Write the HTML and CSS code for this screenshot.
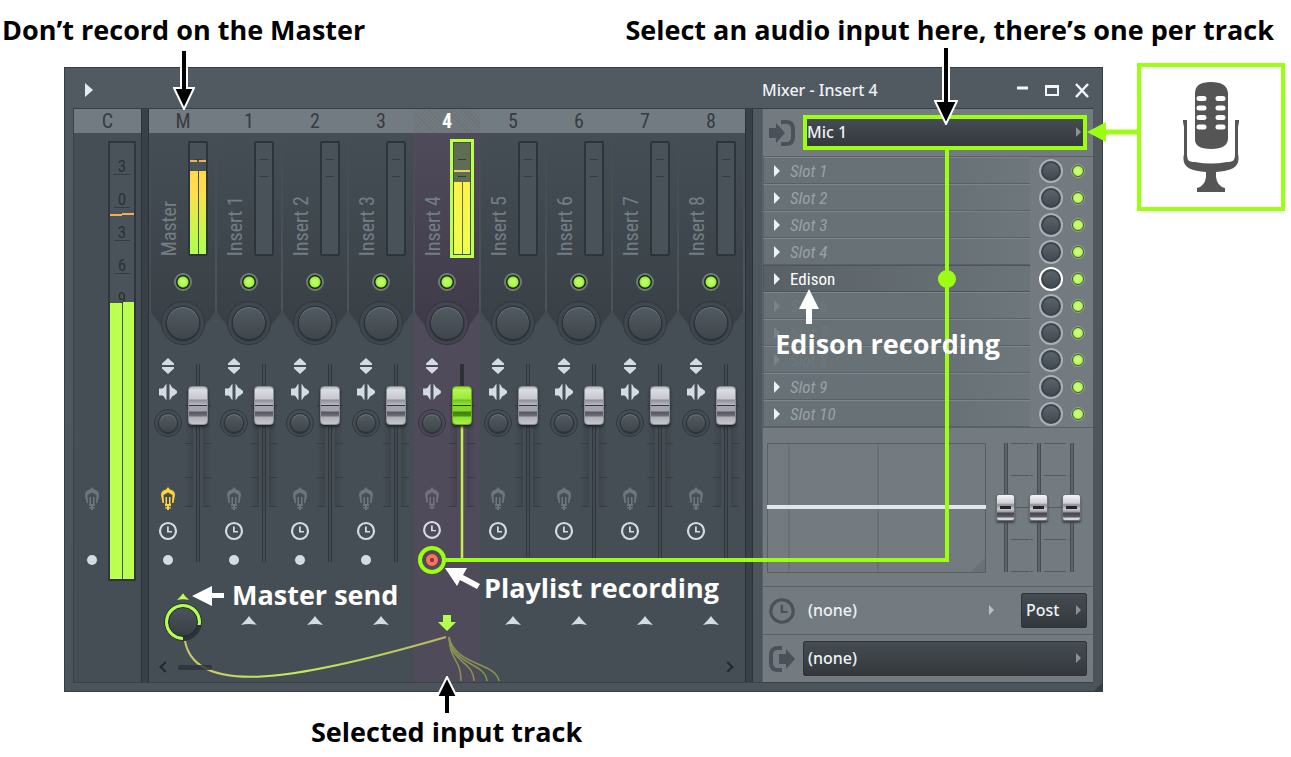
FILE: index.html
```
<!DOCTYPE html>
<html lang="en">
<head>
    <meta charset="UTF-8">
    <meta name="viewport" content="width=device-width, initial-scale=1.0">
    <title>Mixer - Insert 4</title>
    <link rel="stylesheet" href="styles.css">
</head>
<body>
    <!-- shared icons -->
    <svg class="sprite" aria-hidden="true">
        <symbol id="updown" viewBox="0 0 18 18"><path d="M9 1 15 6.500V8H3V6.500ZM3 10H15V11.500L9 17 3 11.500Z"/></symbol>
        <symbol id="pan" viewBox="0 0 18 18"><path d="M7.500 1V17C6 17 6 13 3 12.500H0V5.500H3C6 5 6 1 7.500 1ZM10.500 1C12 1 12 5 15 5.500L18 8V10L15 12.500C12 13 12 17 10.500 17Z"/></symbol>
        <symbol id="plug" viewBox="0 0 16 24"><path d="M8 1 10 3.500C13 4 15 6 15 9L13.500 17H12L12.500 9 8 6.500 3.500 9 4 17H2.500L1 9C1 6 3 4 6 3.500ZM5.500 11H7V18H9V11H10.500V18H11V20H9V21L11 21.500V22.500H9V24H7V22.500H5V21.500L7 21V20H5V18H5.500Z"/></symbol>
        <symbol id="clock" viewBox="0 0 20 20"><circle cx="10" cy="10" r="8" fill="none" stroke="currentColor" stroke-width="2.200"/><path d="M9 5.500H10.800V10H14V11.500H9Z"/></symbol>
        <symbol id="send" viewBox="0 0 16 10"><path d="M8 0C10 3 13 6 16 9 11 7.500 5 7.500 0 9 3 6 6 3 8 0Z"/></symbol>
        <symbol id="arrow-down" viewBox="0 0 22 60"><path d="M8 0V38H1L11 59 21 38H14V0Z" stroke="#fff" stroke-width="2"/></symbol>
    </svg>

    <div class="page">
        <main class="mixer">
            <header class="titlebar">
                <button class="menu-btn" aria-label="Menu"></button>
                <h1>Mixer - Insert 4</h1>
                <div class="window-btns">
                    <button aria-label="Minimize"><svg viewBox="0 0 16 16"><path d="M3 6H14" stroke-width="3"/></svg></button>
                    <button aria-label="Maximize"><svg viewBox="0 0 16 16"><path d="M2 4.500H14V13H2Z" stroke-width="2"/><path d="M1 4.500H15" stroke-width="3"/></svg></button>
                    <button aria-label="Close"><svg viewBox="0 0 16 16"><path d="M2 2 14 15M14 2 2 15" stroke-width="2.500"/></svg></button>
                </div>
            </header>

            <div class="panels">
                <section class="current">
                    <div class="track-head">C</div>
                    <div class="current-body">
                        <div class="current-icons">
                            <svg class="icon plug"><use href="#plug"/></svg>
                            <span class="dot"></span>
                        </div>
                        <div class="big-meter">
                            <ol class="scale"><li>3</li><li>0</li><li>3</li><li>6</li><li>9</li></ol>
                            <span class="big-peak"></span><span class="big-peak right"></span>
                            <span class="big-bar"></span><span class="big-bar right"></span>
                        </div>
                    </div>
                </section>
                <div class="divider"></div>
                <section class="tracks" id="tracks">
                    <svg class="cables" viewBox="0 0 370 48" aria-hidden="true">
                        <defs>
                            <linearGradient id="cable"><stop offset="0" stop-color="#c9c56a"/><stop offset=".4" stop-color="#c4f056"/><stop offset="1" stop-color="#b9b75e"/></linearGradient>
                        </defs>
                        <path d="M36 7C46 62 142 48 297 3" stroke="url(#cable)" stroke-width="2"/>
                        <g stroke="#8a9350" stroke-width="1.500">
                            <path d="M300 3C301 28 312 24 312 47"/>
                            <path d="M300 3C302 30 324 26 325 47"/>
                            <path d="M300 3C304 32 336 28 338 47"/>
                            <path d="M300 3C306 32 347 28 350 47"/>
                        </g>
                    </svg>
                    <button class="scroll-btn left" aria-label="Scroll left"></button>
                    <span class="scroll-thumb"></span>
                    <button class="scroll-btn right" aria-label="Scroll right"></button>
                </section>
                <div class="divider"></div>

                <section class="inspector">
                    <div class="io-row">
                        <svg class="io-icon" viewBox="0 0 28 28"><path d="M1 9H8V4L17 14 8 24V19H1Z"/><path d="M13 3H18Q25 3 25 10V18Q25 25 18 25H13" fill="none" stroke="currentColor" stroke-width="4"/></svg>
                        <label class="select dark lime"><select aria-label="Audio input"><option>Mic 1</option></select></label>
                    </div>
                    <ul class="slots" id="slots"></ul>
                    <div class="eq">
                        <div class="eq-graph"><span class="eq-curve"></span></div>
                        <div class="eq-faders">
                            <input type="range" class="eq-fader" aria-label="Low" value="50">
                            <input type="range" class="eq-fader" aria-label="Mid" value="50">
                            <input type="range" class="eq-fader" aria-label="High" value="50">
                        </div>
                    </div>
                    <div class="io-row">
                        <svg class="io-icon"><use href="#clock"/></svg>
                        <label class="select"><select aria-label="Latency"><option>(none)</option></select></label>
                        <label class="select dark post"><select aria-label="Compensation"><option>Post</option></select></label>
                    </div>
                    <div class="io-row">
                        <svg class="io-icon" viewBox="0 0 28 28"><path d="M11 9H18V4L27 14 18 24V19H11Z"/><path d="M14 3H10Q3 3 3 10V18Q3 25 10 25H14" fill="none" stroke="currentColor" stroke-width="4"/></svg>
                        <label class="select dark"><select aria-label="Audio output"><option>(none)</option></select></label>
                    </div>
                </section>
            </div>

            <!-- callouts laid over the mixer -->
            <span class="wire wire-v"></span>
            <span class="wire wire-h"></span>
            <span class="wire-dot"></span>
            <span class="rec-ring"></span>

            <p class="callout black c-master">Don’t record on the Master</p>
            <svg class="pointer p-master"><use href="#arrow-down"/></svg>
            <p class="callout black c-input">Select an audio input here, there’s one per track</p>
            <svg class="pointer p-input" viewBox="0 0 24 78"><path d="M9 0V54H1L12 77 23 54H15V0Z" stroke="#fff" stroke-width="2"/></svg>
            <p class="callout black c-selected">Selected input track</p>
            <svg class="pointer p-selected" viewBox="0 0 22 38"><path d="M8 38V21H1L11 1 21 21H14V38Z" stroke="#fff" stroke-width="2"/></svg>
            <p class="callout c-send">Master send</p>
            <svg class="pointer p-send" viewBox="0 0 32 20"><path d="M0 10 20 0V7H32V12H20V20Z"/></svg>
            <p class="callout c-playlist">Playlist recording</p>
            <svg class="pointer p-playlist" viewBox="0 0 36 24"><path d="M0 1 22 1 18 8 35 17 32 22 15 13 12 19Z"/></svg>
            <p class="callout c-edison">Edison recording</p>
            <svg class="pointer p-edison" viewBox="0 0 20 36"><path d="M10 0 20 20H13V35H7V20H0Z"/></svg>
        </main>

        <aside class="mic-card">
            <svg class="mic-arrow" viewBox="0 0 50 20" aria-hidden="true"><path d="M0 10 19 0V7.500H50V12.500H19V20Z"/></svg>
            <svg class="mic" viewBox="0 0 58 112" role="img" aria-label="Microphone">
                <path fill-rule="evenodd" d="M13 12Q13 1 29 1T46 12V57Q46 68 29 68T13 57ZM17 15a2.500 2.500 0 0 0 0 5h5a2.500 2.500 0 0 0 0-5ZM17 24.500a2.500 2.500 0 0 0 0 5h5a2.500 2.500 0 0 0 0-5ZM17 34a2.500 2.500 0 0 0 0 5h5a2.500 2.500 0 0 0 0-5ZM17 43.500a2.500 2.500 0 0 0 0 5h5a2.500 2.500 0 0 0 0-5ZM36 15a2.500 2.500 0 0 0 0 5h5a2.500 2.500 0 0 0 0-5ZM36 24.500a2.500 2.500 0 0 0 0 5h5a2.500 2.500 0 0 0 0-5ZM36 34a2.500 2.500 0 0 0 0 5h5a2.500 2.500 0 0 0 0-5ZM36 43.500a2.500 2.500 0 0 0 0 5h5a2.500 2.500 0 0 0 0-5Z"/>
                <path d="M1 39H5V72C5 79 6 81 13 81Q29 84 45 81C52 81 53 79 53 72V39H57V41L56 46V73C59 86 50 90 34 91V96Q35 105 43 107V111H15V107Q23 105 24 96V91C8 90-1 86 2 73V46L1 41Z"/>
            </svg>
        </aside>
    </div>
    <script src="script.js"></script>
</body>
</html>
```
FILE: styles.css
```
* {
    margin: 0;
    padding: 0;
    box-sizing: border-box;
}
body {
    font-family: "Noto Sans", "Open Sans", sans-serif;
    font-size: 16px;
    background: #fff;
    color: #eef2f6;
}
button {
    border: none;
    background: none;
    cursor: pointer;
}
.sprite {
    position: absolute;
    width: 0;
    height: 0;
}
svg {
    display: block;
    fill: currentColor;
}
.page {
    display: flex;
    align-items: flex-start;
    padding: 67px 6px 64px 64px;
}

/* window */
.mixer {
    position: relative;
    flex: 1;
    padding: 0 9px 8px 8px;
    background: linear-gradient(#525a61, #4c545b);
    border: 1px solid #363d43;
}
.mixer::after {
    content: '';
    position: absolute;
    right: 0;
    bottom: 0;
    border: 4px solid #363d43;
    border-top-color: transparent;
    border-left-color: transparent;
}
.titlebar {
    display: flex;
    align-items: center;
    height: 40px;
    padding-top: 4px;
}
.menu-btn {
    margin-left: 12px;
    border: 7px solid transparent;
    border-left: 8px solid #e4ebf3;
    border-right: none;
}
.titlebar h1 {
    width: 331px;
    margin-left: auto;
    font-size: 16px;
    font-weight: 500;
}
.window-btns {
    position: absolute;
    right: 12px;
    display: flex;
    gap: 14px;
}
.window-btns svg {
    width: 16px;
    height: 16px;
    fill: none;
    stroke: #f2f7fc;
}
.panels {
    display: flex;
    border-top: 1px solid #363d43;
    border-bottom: 1px solid #3a4147;
}
.track-head {
    height: 24px;
    line-height: 25px;
    text-align: center;
    font-family: "Liberation Sans Narrow", "Roboto Condensed", "Noto Sans", sans-serif;
    font-size: 20px;
    color: #353c42;
    background: #737b82;
}
.divider {
    width: 8px;
    background: #394047;
    border: 1px solid #2c3237;
    border-width: 0 1px;
}

/* current track */
.current {
    width: 68px;
    background: #464e55;
    border-left: 1px solid #3a4147;
}
.current-body {
    display: flex;
    justify-content: space-between;
    padding: 8px 5px 0 10px;
}
.current-icons {
    display: flex;
    flex-direction: column;
    align-items: center;
    gap: 45px;
    padding-top: 345px;
    color: #6d757d;
}
.big-meter {
    position: relative;
    width: 28px;
    height: 440px;
    background: #4b535a;
    border: 2px solid #2f363c;
}
.scale {
    list-style: none;
    padding-top: 10px;
    font-family: "Liberation Sans Narrow", "Roboto Condensed", "Noto Sans", sans-serif;
    font-size: 17px;
    text-align: center;
    color: #2a3136;
}
.scale li {
    height: 22px;
    line-height: 26px;
    margin: 0 4px 11px;
    border-bottom: 1px solid #343b41;
}
.big-bar, .big-peak {
    position: absolute;
    left: 0;
    bottom: 0;
    width: 12px;
    height: 276px;
    background: #bbff50;
}
.big-bar.right {
    left: auto;
    right: 0;
    width: 11px;
    height: 277px;
}
.big-peak {
    height: 2px;
    bottom: 363px;
    background: #f3b04e;
}
.big-peak.right {
    left: auto;
    right: 0;
    height: 2px;
    bottom: 364px;
}

/* tracks */
.tracks {
    position: relative;
    flex: 1;
    display: flex;
    padding: 0 1px;
    background: linear-gradient(#737b82 24px, #464e55 24px);
}
.track {
    flex: 1;
    min-width: 0;
    height: 573px;
}
.track.selected {
    background: #504b5b;
}
.selected .track-head {
    color: #fff;
    font-weight: 700;
    background: repeating-linear-gradient(45deg, #727a80 0 2px, #6a7379 2px 3px);
}
.track-top {
    position: relative;
    height: 213px;
    padding-top: 8px;
}
.track-top::before {
    content: '';
    position: absolute;
    inset: 0 1px 20px;
    background: linear-gradient(#464e55, #394147);
    clip-path: polygon(0 0, 100% 0, 100% 93%, 84% 100%, 16% 100%, 0 93%);
}
.track-top::after {
    content: '';
    position: absolute;
    top: 60px;
    right: -1px;
    bottom: 36px;
    width: 2px;
    background: linear-gradient(transparent, #4d555c);
}
.selected .track-top::before {
    background: linear-gradient(#504b5b, #3f3b49);
}
.track-label {
    position: relative;
    display: flex;
    justify-content: space-between;
    align-items: flex-end;
    padding: 0 8px 0 7px;
}
.track-name {
    writing-mode: vertical-rl;
    transform: rotate(180deg);
    font-family: "Liberation Sans Narrow", "Roboto Condensed", "Noto Sans", sans-serif;
    font-size: 20px;
    line-height: 24px;
    color: #757d84;
}
.meter {
    position: relative;
    display: flex;
    align-items: flex-end;
    gap: 1px;
    width: 20px;
    height: 115px;
    border: 2px solid #2d343a;
    border-radius: 2px;
    background: #4a5259;
}
.meter::before, .meter::after {
    content: '';
    position: absolute;
    left: 4px;
    right: 4px;
    top: 16px;
    height: 1px;
    background: #343b41;
}
.meter::after {
    top: 33px;
}
.meter i {
    z-index: 1;
    flex: 1;
    height: 83px;
    background: linear-gradient(#ffd94d, #ffdf4d 25%, #b4ff4d 90%);
}
.meter b {
    position: absolute;
    z-index: 1;
    top: 17px;
    left: 0;
    right: 0;
    height: 2px;
    background: linear-gradient(90deg, #f3b04e 7px, transparent 7px 9px, #f3b04e 9px);
}
.selected .meter {
    border-color: #3c5a28;
    border-radius: 0;
    background: #5f6d53;
    outline: 3px solid #bcff4d;
    outline-offset: -1px;
}
.selected .meter i {
    height: 72px;
    background: linear-gradient(#fff04a, #eeff4a);
}
.selected .meter b {
    top: 27px;
    background: #e8d35a;
}
.led {
    appearance: none;
    display: block;
    position: relative;
    width: 18px;
    height: 18px;
    margin: 17px auto 10px;
    border-radius: 50%;
    border: 2px solid #6f7c76;
    background: radial-gradient(circle, #c4ff6a 2px, #93ee3e 5px, #14240c 6px);
}
.knob {
    display: block;
    position: relative;
    flex: none;
    width: 44px;
    height: 44px;
    margin: 0 auto;
    border-radius: 50%;
    border: 1px solid #2f363c;
    background: #40484f;
}
.selected .track-top .knob {
    background: #474352;
}
.knob::before {
    content: '';
    position: absolute;
    inset: 4px;
    border-radius: 50%;
    border: 1px solid #282f34;
    background: linear-gradient(#535b62, #3e454b);
    box-shadow: inset 0 1px 1px #6c757d, 0 1px 2px #23292d;
}
.knob.small {
    width: 28px;
    height: 28px;
    background: none;
}
.knob.small::before {
    inset: 3px;
}
.track-low {
    display: flex;
    justify-content: space-between;
    padding: 11px 8px 0 4px;
}
.track-icons {
    display: flex;
    flex-direction: column;
    align-items: center;
    gap: 8px;
    width: 28px;
    height: 209px;
    color: #d4dbe2;
}
.icon {
    width: 18px;
    height: 18px;
}
.icon.plug {
    width: 16px;
    height: 24px;
    color: #6d757d;
}
.track-icons .plug {
    margin-top: 41px;
}
.selected .plug {
    color: #746f7d;
}
.master .plug {
    color: #ffd23f;
}
.icon.clock {
    width: 20px;
    height: 20px;
    margin: 3px 0 6px;
}
.dot {
    width: 10px;
    height: 10px;
    border-radius: 50%;
    background: #d4dbe2;
}
.selected .dot {
    width: 12px;
    height: 12px;
    border: 4px solid #ff7058;
    background: #6b3b3f;
}
.fader-box {
    display: flex;
    justify-content: center;
    width: 26px;
    height: 198px;
    margin: 7px -3px 0 0;
    background: linear-gradient(90deg, #343b41 8px, transparent 8px 18px, #343b41 18px) 0 79px / 26px 1px no-repeat,
        linear-gradient(90deg, #343b41 8px, transparent 8px 18px, #343b41 18px) 0 113px / 26px 1px no-repeat,
        linear-gradient(90deg, #343b41 8px, transparent 8px 18px, #343b41 18px) 0 142px / 26px 1px no-repeat,
        linear-gradient(#343b41, #343b41) 0 41px / 26px 1px no-repeat,
        linear-gradient(90deg, #0000 0, #0002 8px, #0000 8px 18px, #0002 18px, #0000) 0 60px / 26px 82px no-repeat;
}
.fader {
    appearance: none;
    writing-mode: vertical-lr;
    direction: rtl;
    width: 20px;
    height: 198px;
    background: linear-gradient(90deg, transparent 8px, #2f363c 8px 9px, #434b51 9px 11px, #2f363c 11px 12px, transparent 12px);
}
.fader::-webkit-slider-thumb {
    appearance: none;
    width: 20px;
    height: 39px;
    border-radius: 4px;
    border: 1px solid #8c8e98;
    background: linear-gradient(#b9bac2, #dcdde3 3px, #c6c7cf 12px, #8d8e98 13px, #b9bac2 18px, #33363a 18px 19px, #a3a4ad 19px 24px, #55565e 25px, #6e6f78 29px, #aeafb8 30px, #c6c7cf);
    box-shadow: 0 2px 3px #1f2428;
}
.selected .fader {
    background: linear-gradient(90deg, transparent 8px, #6d7a3e 8px 9px, #c5e86a 9px 11px, #6d7a3e 11px 12px, transparent 12px) 0 40px no-repeat,
        linear-gradient(90deg, transparent 8px, #2b3238 8px 12px, transparent 12px);
}
.selected .fader::-webkit-slider-thumb {
    border-color: #6fae1a;
    background: linear-gradient(#8fe02c, #b6f45c 3px, #98ea38 12px, #6cc31c 13px, #93e637 18px, #203a08 18px 19px, #86d62c 19px 24px, #3f7d0c 25px, #4d9212 29px, #8fe02c 30px, #a5f04c);
}
.send {
    display: flex;
    flex-direction: column;
    align-items: center;
    gap: 2px;
    padding-top: 50px;
}
.send svg {
    width: 16px;
    height: 10px;
    color: #d4dbe2;
}
.master .send {
    padding-top: 27px;
}
.master .send svg {
    width: 12px;
    height: 8px;
    color: #bbff50;
}
.send-knob {
    position: relative;
    width: 38px;
    height: 38px;
    border-radius: 50%;
    background: conic-gradient(#b4ff4d 28%, #2b3238 28% 50%, #b4ff4d 50%);
    border: 1px solid #2b3238;
}
.send-knob::before {
    content: '';
    position: absolute;
    inset: 3px;
    border-radius: 50%;
    border: 1px solid #20262b;
    background: linear-gradient(#4d555c, #363d43);
}
.selected .send {
    padding-top: 48px;
}
.selected .send svg {
    width: 18px;
    height: 18px;
    color: #b4ff4d;
}
.cables {
    position: absolute;
    left: 0;
    bottom: 0;
    width: 370px;
    height: 48px;
    fill: none;
}
.scroll-btn {
    position: absolute;
    bottom: 11px;
    left: 12px;
    width: 8px;
    height: 8px;
    border: 1px solid #23292d;
    border-width: 0 0 2px 2px;
    transform: rotate(45deg);
}
.scroll-btn.right {
    left: auto;
    right: 13px;
    transform: rotate(225deg);
}
.scroll-thumb {
    position: absolute;
    left: 29px;
    bottom: 12px;
    width: 34px;
    height: 5px;
    border-radius: 2px;
    background: #2b3238cc;
}

/* inspector */
.inspector {
    width: 331px;
    margin-left: 9px;
    background: #737b81;
    border-left: 1px solid #5a6268;
}
.io-row {
    display: flex;
    align-items: center;
    gap: 7px;
    height: 48px;
    padding: 0 6px 0 5px;
}
.inspector > .io-row:first-child {
    height: 47px;
}
.eq ~ .io-row {
    border-top: 1px solid #596167;
}
.io-icon {
    flex: none;
    width: 28px;
    height: 28px;
    color: #4a5158;
}
.select {
    position: relative;
    flex: 1;
    height: 35px;
    border-radius: 2px;
}
.select::after {
    content: '';
    position: absolute;
    right: 6px;
    top: 12px;
    border: 5px solid transparent;
    border-left: 5px solid #8a9298;
    border-right: none;
}
.select:not(.dark)::after {
    border-left-color: #b9c0c6;
}
.select select {
    appearance: none;
    width: 100%;
    height: 100%;
    padding: 0 4px 2px;
    border: 1px solid transparent;
    background: none;
    font: 500 16px "Noto Sans", "Open Sans", sans-serif;
    color: #eef2f6;
}
.select.dark select {
    border-color: #2e3439;
    border-radius: 2px;
    background: linear-gradient(#454c52, #33383c);
}
.select.lime select {
    border: 4px solid #9cff12;
    border-radius: 0;
    padding: 0 0 2px;
}
.select.post {
    flex: 0 0 66px;
    margin-left: 14px;
}
.slots {
    list-style: none;
    border-top: 1px solid #596167;
    border-bottom: 1px solid #596167;
}
.slot {
    display: flex;
    align-items: center;
    height: 27px;
    padding-right: 9px;
}
.slot-name {
    flex: 1;
    display: flex;
    align-items: center;
    gap: 10px;
    height: 27px;
    margin-right: -8px;
    padding-left: 10px;
    border: 1px solid #596167;
    border-top-color: #7e868c;
    border-right: none;
    background: linear-gradient(90deg, #677176 70%, #6e777c);
    font: italic 17px "Liberation Sans Narrow", "Roboto Condensed", "Noto Sans", sans-serif;
    color: #99a1a6;
}
.slot-name::before {
    content: '';
    border: 6px solid transparent;
    border-left: 6px solid #eef2f6;
    border-right: none;
}
.slot.faded .slot-name {
    color: #6d777c;
}
.slot.faded .slot-name::before {
    border-left-color: #78838a;
}
.slot.used .slot-name {
    font-style: normal;
    color: #fff;
    background: linear-gradient(90deg, #596167, #6b7479);
    border-color: #4d555a;
}
.slot .knob {
    width: 24px;
    height: 24px;
    margin: 0 9px 0 17px;
    border: 2px solid #a9b0b6;
    background: #3c434a;
}
.slot .knob::before {
    inset: 1px;
    border-color: #3c434a;
    background: linear-gradient(#5a626a, #434a52);
    box-shadow: none;
}
.slot.used .knob {
    border-color: #fff;
}
.slot .led {
    width: 12px;
    height: 12px;
    margin: 0;
    border: 1px solid #3b5a20;
    outline: 1px solid #94a294;
    background: radial-gradient(circle, #ccff78 2px, #a8f24e 5px);
}
.eq {
    display: flex;
    justify-content: space-between;
    height: 158px;
    padding: 15px 12px 0 4px;
}
.eq-graph {
    position: relative;
    flex: 1;
    height: 130px;
    margin-right: 10px;
    border: 1px solid #575f65;
    background: linear-gradient(90deg, transparent 20px, #697177 20px 22px, transparent 22px 109px, #697177 109px 111px, transparent 111px);
}
.eq-graph::after {
    content: '';
    position: absolute;
    right: 0;
    bottom: 0;
    border: 7px solid #697177;
    border-top-color: transparent;
    border-left-color: transparent;
}
.eq-curve {
    position: absolute;
    left: -1px;
    right: -1px;
    top: 61px;
    height: 4px;
    background: #e1e6ee;
}
.eq-faders {
    display: flex;
    gap: 14px;
    height: 129px;
    background: repeating-linear-gradient(#535b61 0 1px, transparent 1px 32px);
}
.eq-fader {
    appearance: none;
    writing-mode: vertical-lr;
    direction: rtl;
    width: 19px;
    height: 129px;
    background: linear-gradient(90deg, #737b81 1px, transparent 1px 4px, #737b81 4px 8px, #454d53 8px 9px, #5d656b 9px 11px, #454d53 11px 12px, #737b81 12px 15px, transparent 15px);
}
.eq-fader:first-child {
    background: linear-gradient(90deg, #737b81 8px, #454d53 8px 9px, #5d656b 9px 11px, #454d53 11px 12px, #737b81 12px 15px, transparent 15px);
}
.eq-fader:last-child {
    background: linear-gradient(90deg, transparent 4px, #737b81 4px 8px, #454d53 8px 9px, #5d656b 9px 11px, #454d53 11px 12px, #737b81 12px);
}
.eq-fader::-webkit-slider-thumb {
    appearance: none;
    width: 19px;
    height: 27px;
    border-radius: 3px;
    border: 1px solid #6c6d75;
    background: linear-gradient(#22252a, #22252a) center 11px / 11px 3px no-repeat,
        linear-gradient(#f4f4f8, #cfcfd6 8px, #8b8c94 10px, #c9cad0 14px, #9a9ba3 17px, #45464c 18px, #5d5e66 22px, #d5d6dc 23px);
    box-shadow: 0 2px 2px #3c4349;
}

/* callouts */
.callout {
    position: absolute;
    font-family: "Open Sans", Lato, sans-serif;
    font-size: 27px;
    font-weight: 700;
    line-height: 30px;
    white-space: nowrap;
    color: #fff;
}
.callout.black {
    color: #000;
}
.c-master { left: -63px; top: -53px; }
.c-input { right: -172px; top: -53px; }
.c-selected { left: 246px; top: 649px; }
.c-send { left: 167px; top: 512px; }
.c-playlist { left: 419px; top: 505px; }
.c-edison { right: 102px; top: 261px; }
.pointer {
    position: absolute;
    color: #fff;
}
.p-master, .p-input, .p-selected { color: #000; }
.p-master { left: 108px; top: -18px; width: 22px; height: 60px; }
.p-input { right: 144px; top: -21px; width: 24px; height: 78px; }
.p-selected { left: 371px; top: 608px; width: 22px; height: 38px; }
.p-send { left: 127px; top: 518px; width: 32px; height: 20px; }
.p-playlist { left: 380px; top: 499px; width: 36px; height: 24px; }
.p-edison { right: 283px; top: 221px; width: 20px; height: 36px; }
.wire {
    position: absolute;
    background: #9cff12;
}
.wire-v {
    right: 153px;
    top: 81px;
    width: 4px;
    height: 413px;
}
.wire-h {
    left: 380px;
    right: 153px;
    top: 490px;
    height: 4px;
}
.wire-dot {
    position: absolute;
    right: 146px;
    top: 202px;
    width: 18px;
    height: 18px;
    border-radius: 50%;
    background: #9cff12;
}
.rec-ring {
    position: absolute;
    left: 353px;
    top: 478px;
    width: 28px;
    height: 28px;
    border: 4px solid #9cff12;
    border-radius: 50%;
}
.mic-card {
    position: relative;
    display: flex;
    justify-content: center;
    align-items: center;
    width: 148px;
    height: 148px;
    margin: -4px 0 0 34px;
    border: 4px solid #9cff12;
}
.mic {
    width: 58px;
    height: 112px;
    color: #555;
}
.mic-arrow {
    position: absolute;
    left: -54px;
    top: 55px;
    width: 50px;
    height: 20px;
    color: #9cff12;
}
```
FILE: script.js
```
const tracks = document.getElementById("tracks");
const slots = document.getElementById("slots");

function icon(name) {
    return `<svg class="icon ${name}"><use href="#${name}"/></svg>`;
}

for (let i = 0; i < 9; i++) {
    let name = i === 0 ? "Master" : "Insert " + i;
    let level = i === 0 || i === 4 ? "<i></i><i></i><b></b>" : "";
    let send = `<svg><use href="#send"/></svg>`;
    if (i === 0) send += `<button class="send-knob" aria-label="Send level"></button>`;
    if (i === 4) send = `<svg viewBox="0 0 18 18"><path d="M5 1H13V8H18L9 17 0 8H5Z"/></svg>`;

    let track = document.createElement("div");
    track.className = "track" + (i === 0 ? " master" : "") + (i === 4 ? " selected" : "");
    track.innerHTML = `
        <div class="track-head">${i || "M"}</div>
        <div class="track-top">
            <div class="track-label">
                <span class="track-name">${name}</span>
                <div class="meter">${level}</div>
            </div>
            <input type="checkbox" class="led" aria-label="${name} on" checked>
            <button class="knob" aria-label="${name} pan"></button>
        </div>
        <div class="track-low">
            <div class="track-icons">
                ${icon("updown")}
                ${icon("pan")}
                <button class="knob small" aria-label="${name} stereo"></button>
                ${icon("plug")}
                ${icon("clock")}
                ${i < 5 ? '<span class="dot"></span>' : ""}
            </div>
            <div class="fader-box">
                <input type="range" class="fader" aria-label="${name} volume" value="86">
            </div>
        </div>
        <div class="send">${send}</div>`;
    tracks.insertBefore(track, tracks.querySelector(".cables"));
}

for (let i = 1; i <= 10; i++) {
    let name = i === 5 ? "Edison" : "Slot " + i;
    let slot = document.createElement("li");
    slot.className = "slot" + (i === 5 ? " used" : "") + (i > 5 && i < 9 ? " faded" : "");
    slot.innerHTML = `
        <button class="slot-name">${name}</button>
        <button class="knob" aria-label="${name} mix"></button>
        <input type="checkbox" class="led" aria-label="${name} on" checked>`;
    slots.appendChild(slot);
}
```
